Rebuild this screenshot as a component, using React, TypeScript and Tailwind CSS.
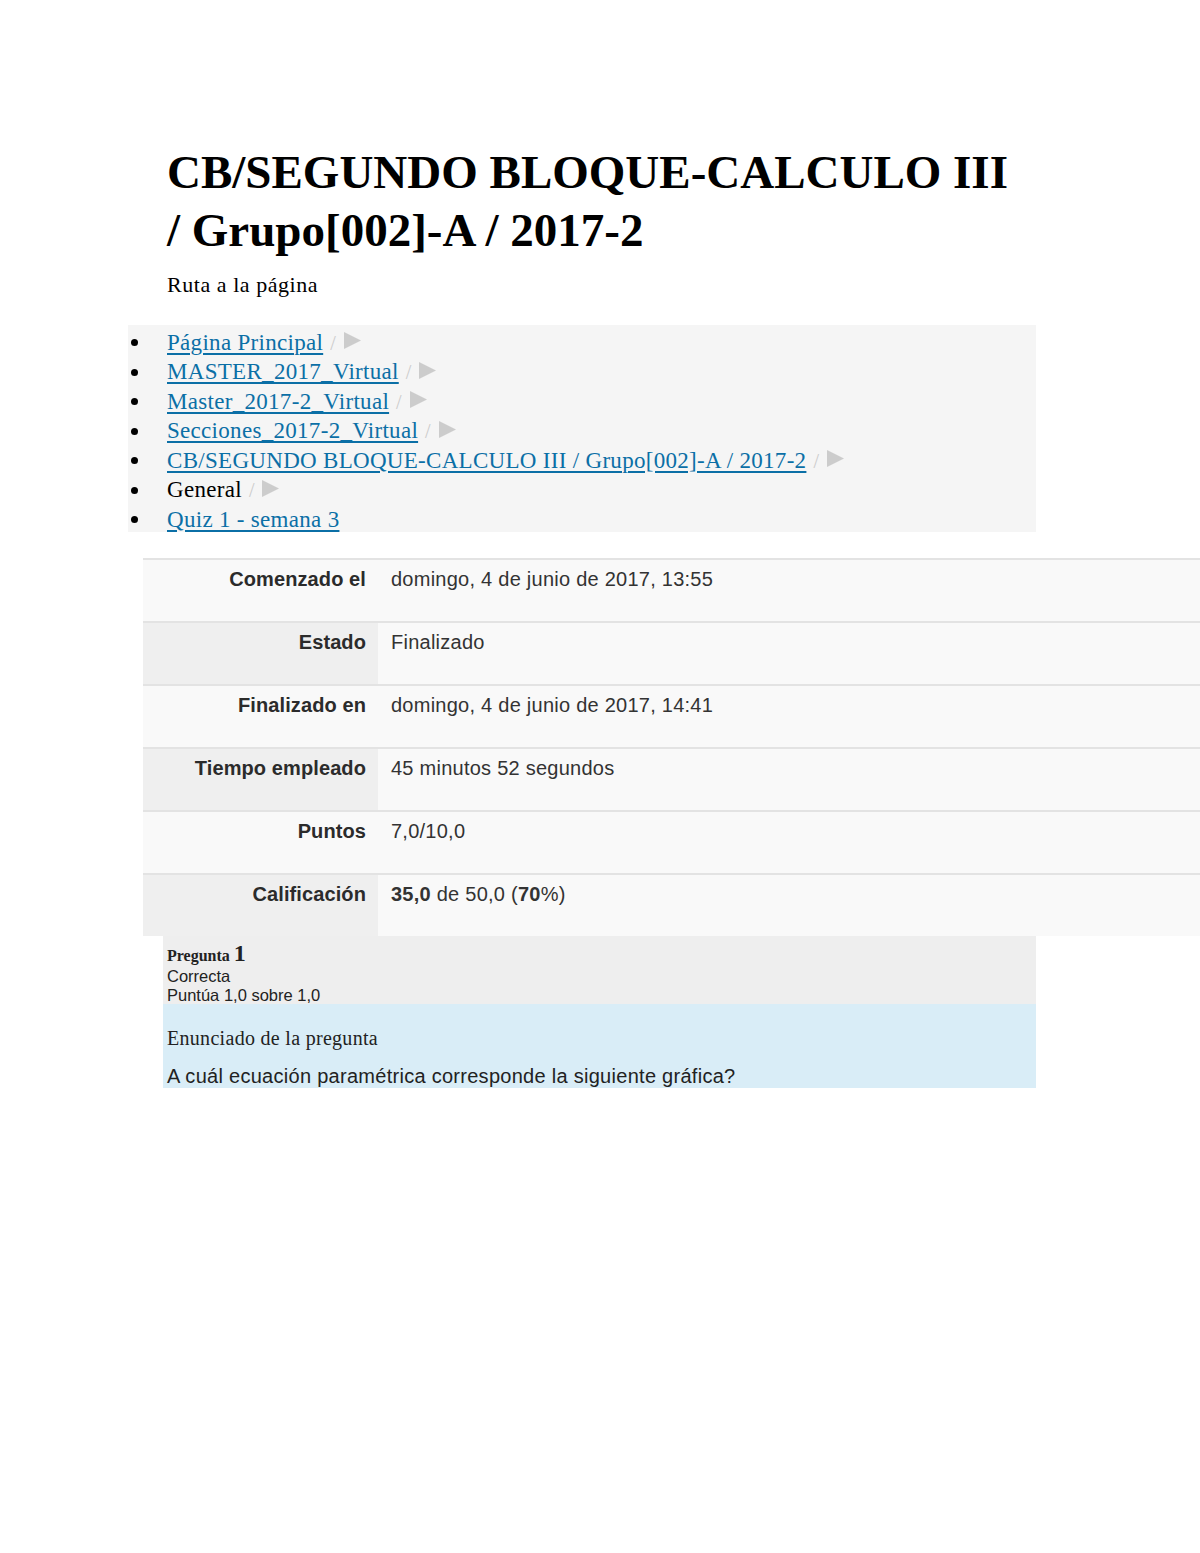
import React from "react"

const serif = "font-['Liberation_Serif','Times_New_Roman',serif]"
const sans = "font-['Liberation_Sans',Arial,sans-serif]"

type Crumb = { label: string; link: boolean; sep: boolean }

const crumbs: Crumb[] = [
  { label: "Página Principal", link: true, sep: true },
  { label: "MASTER_2017_Virtual", link: true, sep: true },
  { label: "Master_2017-2_Virtual", link: true, sep: true },
  { label: "Secciones_2017-2_Virtual", link: true, sep: true },
  { label: "CB/SEGUNDO BLOQUE-CALCULO III / Grupo[002]-A / 2017-2", link: true, sep: true },
  { label: "General", link: false, sep: true },
  { label: "Quiz 1 - semana 3", link: true, sep: false },
]

const rows: { label: string; value: React.ReactNode }[] = [
  { label: "Comenzado el", value: "domingo, 4 de junio de 2017, 13:55" },
  { label: "Estado", value: "Finalizado" },
  { label: "Finalizado en", value: "domingo, 4 de junio de 2017, 14:41" },
  { label: "Tiempo empleado", value: "45 minutos 52 segundos" },
  { label: "Puntos", value: "7,0/10,0" },
  {
    label: "Calificación",
    value: (
      <>
        <b>35,0</b> de 50,0 (<b>70</b>%)
      </>
    ),
  },
]

function Separator() {
  return (
    <span className="inline-flex items-center ml-[7px] text-[#cccccc] tracking-normal">
      <span className="text-[20px]">/</span>
      <svg width="17" height="17" viewBox="0 0 17 17" className="ml-[8px] -mt-[4px]">
        <polygon points="0,0 17,8.5 0,17" fill="#cccccc" />
      </svg>
    </span>
  )
}

export default function App() {
  return (
    <div className="min-h-[1553px] w-[1200px] bg-white overflow-hidden">
      {/* Title */}
      <div className={`pt-[143px] pl-[167px] ${serif}`}>
        <h1 className="text-[47px] leading-[58px] font-bold text-black">
          CB/SEGUNDO BLOQUE-CALCULO III
          <br />/ Grupo[002]-A / 2017-2
        </h1>
        <p className="mt-[12px] text-[22px] leading-[28px] tracking-[0.55px] text-black">Ruta a la página</p>
      </div>

      {/* Breadcrumb */}
      <div className={`mt-[26px] ml-[128px] w-[908px] h-[207px] bg-[#f5f5f5] pt-[3px] ${serif}`}>
        <ul>
          {crumbs.map((c) => (
            <li key={c.label} className="flex items-center h-[29.5px] text-[23px] tracking-[0.3px]">
              <span className="w-[39px] flex">
                <span className="ml-[3px] w-[7px] h-[7px] rounded-full bg-black" />
              </span>
              {c.link ? (
                <a className="text-[#0b6fa6] underline underline-offset-[3px] decoration-[2px]">{c.label}</a>
              ) : (
                <span className="text-black">{c.label}</span>
              )}
              {c.sep && <Separator />}
            </li>
          ))}
        </ul>
      </div>

      {/* Summary table */}
      <div className={`mt-[26px] ml-[143px] w-[1057px] ${sans}`}>
        {rows.map((r, i) => (
          <div key={r.label} className="flex h-[63px] border-t-2 border-[#e3e3e3]">
            <div
              className={`w-[235px] pr-[12px] pt-[7px] text-right text-[20px] leading-[24px] tracking-[0.1px] font-bold text-[#2b2b2b] ${
                i % 2 === 1 ? "bg-[#efefef]" : "bg-[#f9f9f9]"
              }`}
            >
              {r.label}
            </div>
            <div className="flex-1 bg-[#f9f9f9] pl-[13px] pt-[7px] text-[20px] leading-[24px] tracking-[0.25px] text-[#333333]">
              {r.value}
            </div>
          </div>
        ))}
      </div>

      {/* Question */}
      <div className="ml-[163px] w-[873px]">
        <div className="h-[68px] bg-[#eeeeee] pl-[4px] pt-[6px] text-[#222222]">
          <div className={`${serif} font-bold leading-[22px]`}>
            <span className="text-[16px]">Pregunta </span>
            <span className="text-[24px]">1</span>
          </div>
          <div className={`${sans} text-[16.5px] leading-[19px]`}>Correcta</div>
          <div className={`${sans} text-[16.5px] leading-[19px]`}>Puntúa 1,0 sobre 1,0</div>
        </div>
        <div className="h-[84px] bg-[#d9edf7] pl-[4px] pt-[21px] text-[#222222]">
          <p className={`${serif} text-[20px] leading-[26px] tracking-[0.3px]`}>Enunciado de la pregunta</p>
          <p className={`${sans} mt-[13px] text-[20px] leading-[24px] tracking-[0.28px]`}>
            A cuál ecuación paramétrica corresponde la siguiente gráfica?
          </p>
        </div>
      </div>
    </div>
  )
}
